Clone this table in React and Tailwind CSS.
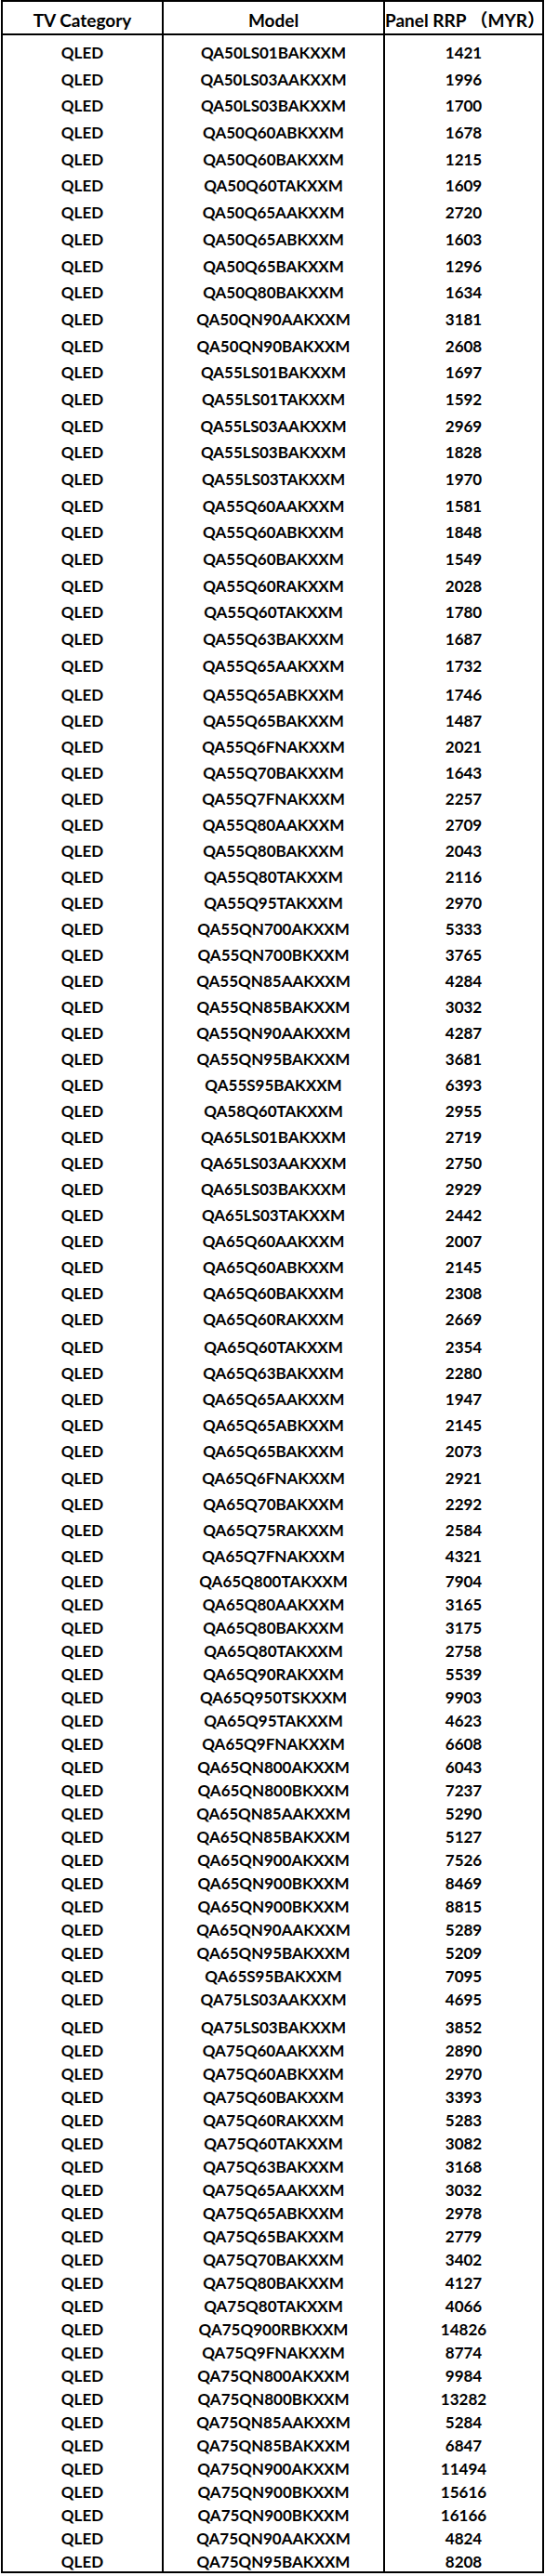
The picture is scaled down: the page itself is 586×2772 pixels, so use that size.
import React from "react";

const DATA = `QA50LS01BAKXXM 1421
QA50LS03AAKXXM 1996
QA50LS03BAKXXM 1700
QA50Q60ABKXXM 1678
QA50Q60BAKXXM 1215
QA50Q60TAKXXM 1609
QA50Q65AAKXXM 2720
QA50Q65ABKXXM 1603
QA50Q65BAKXXM 1296
QA50Q80BAKXXM 1634
QA50QN90AAKXXM 3181
QA50QN90BAKXXM 2608
QA55LS01BAKXXM 1697
QA55LS01TAKXXM 1592
QA55LS03AAKXXM 2969
QA55LS03BAKXXM 1828
QA55LS03TAKXXM 1970
QA55Q60AAKXXM 1581
QA55Q60ABKXXM 1848
QA55Q60BAKXXM 1549
QA55Q60RAKXXM 2028
QA55Q60TAKXXM 1780
QA55Q63BAKXXM 1687
QA55Q65AAKXXM 1732
QA55Q65ABKXXM 1746
QA55Q65BAKXXM 1487
QA55Q6FNAKXXM 2021
QA55Q70BAKXXM 1643
QA55Q7FNAKXXM 2257
QA55Q80AAKXXM 2709
QA55Q80BAKXXM 2043
QA55Q80TAKXXM 2116
QA55Q95TAKXXM 2970
QA55QN700AKXXM 5333
QA55QN700BKXXM 3765
QA55QN85AAKXXM 4284
QA55QN85BAKXXM 3032
QA55QN90AAKXXM 4287
QA55QN95BAKXXM 3681
QA55S95BAKXXM 6393
QA58Q60TAKXXM 2955
QA65LS01BAKXXM 2719
QA65LS03AAKXXM 2750
QA65LS03BAKXXM 2929
QA65LS03TAKXXM 2442
QA65Q60AAKXXM 2007
QA65Q60ABKXXM 2145
QA65Q60BAKXXM 2308
QA65Q60RAKXXM 2669
QA65Q60TAKXXM 2354
QA65Q63BAKXXM 2280
QA65Q65AAKXXM 1947
QA65Q65ABKXXM 2145
QA65Q65BAKXXM 2073
QA65Q6FNAKXXM 2921
QA65Q70BAKXXM 2292
QA65Q75RAKXXM 2584
QA65Q7FNAKXXM 4321
QA65Q800TAKXXM 7904
QA65Q80AAKXXM 3165
QA65Q80BAKXXM 3175
QA65Q80TAKXXM 2758
QA65Q90RAKXXM 5539
QA65Q950TSKXXM 9903
QA65Q95TAKXXM 4623
QA65Q9FNAKXXM 6608
QA65QN800AKXXM 6043
QA65QN800BKXXM 7237
QA65QN85AAKXXM 5290
QA65QN85BAKXXM 5127
QA65QN900AKXXM 7526
QA65QN900BKXXM 8469
QA65QN900BKXXM 8815
QA65QN90AAKXXM 5289
QA65QN95BAKXXM 5209
QA65S95BAKXXM 7095
QA75LS03AAKXXM 4695
QA75LS03BAKXXM 3852
QA75Q60AAKXXM 2890
QA75Q60ABKXXM 2970
QA75Q60BAKXXM 3393
QA75Q60RAKXXM 5283
QA75Q60TAKXXM 3082
QA75Q63BAKXXM 3168
QA75Q65AAKXXM 3032
QA75Q65ABKXXM 2978
QA75Q65BAKXXM 2779
QA75Q70BAKXXM 3402
QA75Q80BAKXXM 4127
QA75Q80TAKXXM 4066
QA75Q900RBKXXM 14826
QA75Q9FNAKXXM 8774
QA75QN800AKXXM 9984
QA75QN800BKXXM 13282
QA75QN85AAKXXM 5284
QA75QN85BAKXXM 6847
QA75QN900AKXXM 11494
QA75QN900BKXXM 15616
QA75QN900BKXXM 16166
QA75QN90AAKXXM 4824
QA75QN95BAKXXM 8208`
  .split("\n")
  .map((l) => l.trim().split(" "));

function rowClass(i) {
  const n = i + 1;
  if (n === 1) return "h-[33.7px] pt-[9px]";
  if (n <= 23) return "h-[28.7px] pt-[4px]";
  if (n === 24) return "h-[31px] pt-[4px]";
  if (n <= 48) return "h-[28px] pt-[4px]";
  if (n === 49) return "h-[30.3px] pt-[4px]";
  if (n <= 57) return "h-[28.1px] pt-[4px]";
  if (n === 58) return "h-[27.6px] pt-[4px]";
  if (n <= 76) return "h-[25px] pt-[4px]";
  if (n === 77) return "h-[29.4px] pt-[4px]";
  if (n <= 100) return "h-[25px] pt-[4px]";
  return "h-[23.8px] pt-[4px]";
}

export default function App() {
  return (
    <div className="bg-white w-[586px] min-h-[2772px] font-['Lato','Noto_Sans_CJK_SC',sans-serif] text-black">
      <div className="ml-[1px] w-[584px] border-2 border-black">
        <div className="grid grid-cols-[173px_238px_169px] h-[36px] border-b-2 border-black text-[19px] font-bold leading-[20px]">
          <div className="border-r-2 border-black text-center pt-[10px]">TV Category</div>
          <div className="border-r-2 border-black text-center pt-[10px]">Model</div>
          <div className="text-center pt-[10px] whitespace-nowrap">Panel RRP （MYR）</div>
        </div>
        {DATA.map(([model, price], i) => {
          const rc = rowClass(i);
          return (
            <div key={i} className="grid grid-cols-[173px_238px_169px] text-[17px] font-bold leading-[20px]">
              <div className={`border-r-2 border-black text-center ${rc}`}>QLED</div>
              <div className={`border-r-2 border-black text-center ${rc}`}>{model}</div>
              <div className={`text-center ${rc}`}>{price}</div>
            </div>
          );
        })}
      </div>
    </div>
  );
}
